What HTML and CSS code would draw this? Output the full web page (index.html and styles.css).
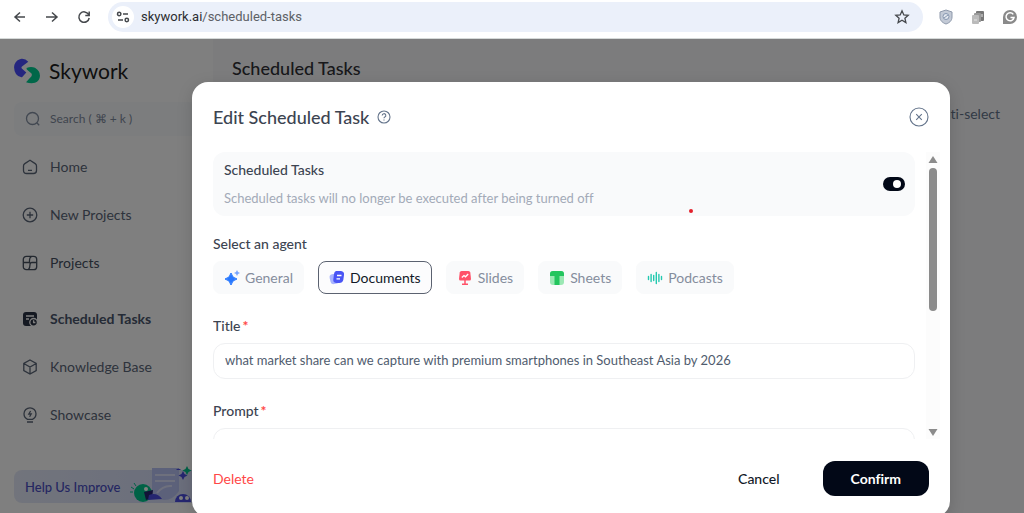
FILE: index.html
```html
<!DOCTYPE html>
<html lang="en">
<head>
  <meta charset="UTF-8">
  <meta name="viewport" content="width=device-width, initial-scale=1.0">
  <title>Scheduled Tasks</title>
  <link rel="stylesheet" href="styles.css">
</head>
<body>
  <!-- Browser bar -->
  <header class="browser-bar">
    <button class="bar-btn" aria-label="Back"><svg width="16" height="16" viewBox="0 0 16 16"><path d="M13 8H3M8 3.500L3 8l5 4.500"/></svg></button>
    <button class="bar-btn" aria-label="Forward"><svg width="16" height="16" viewBox="0 0 16 16"><path d="M2 8h11M8 3.500L13 8l-5 4.500"/></svg></button>
    <button class="bar-btn" aria-label="Reload"><svg width="16" height="16" viewBox="0 0 16 16"><path d="M12.600 5.500A5.200 5.200 0 1 0 13.200 9M13.200 2.500v4H9.300"/></svg></button>
    <div class="address">
      <span class="site-info"><svg width="14" height="14" viewBox="0 0 14 14"><circle cx="3.2" cy="4" r="1.7"/><path d="M7 4h5M2 10h5"/><circle cx="10.8" cy="10" r="1.7"/></svg></span>
      <span class="url">skywork.ai<span class="path">/scheduled-tasks</span></span>
      <button class="bar-btn star" aria-label="Bookmark"><svg width="16" height="16" viewBox="0 0 16 16"><path d="M8 1.8l1.8 4.1 4.4.4-3.3 2.9 1 4.4L8 11.3l-3.9 2.3 1-4.4-3.3-2.9 4.4-.4z"/></svg></button>
    </div>
    <div class="extensions">
      <svg width="14" height="16" viewBox="0 0 14 16"><path d="M7 1l6 2v5c0 4-3 6-6 7-3-1-6-3-6-7V3z" fill="#c3cad6" stroke="#8e99ab"/><circle cx="7" cy="7.5" r="3" fill="#e3e8ef" stroke="#8797b0"/><path d="M5 9l4-3" stroke="#8797b0"/></svg>
      <svg width="14" height="14" viewBox="0 0 14 14"><rect x="5" y="1" width="8" height="10" rx="1" fill="#777"/><rect x="3" y="3" width="7" height="9" rx="1" fill="#999"/><rect x="1" y="5" width="7" height="9" rx="1" fill="#bbb"/><path d="M3 10h3M11 4v3" stroke="#e5e5e5"/></svg>
      <svg width="14" height="14" viewBox="0 0 14 14"><path d="M0 14V7a7 7 0 1 1 7 7z" fill="#8a8a8a"/><path d="M10.3 4.4A4 4 0 1 0 11 7.5H7.5" fill="none" stroke="#fff" stroke-width="1.5"/></svg>
    </div>
  </header>

  <div class="app">
    <!-- Sidebar -->
    <aside class="sidebar">
      <a class="logo" href="#">
        <svg width="26" height="26" viewBox="0 0 26 26"><path d="M14.300 3.700Q11.500.500 7.500.800 2.500 1.600.500 6.500-.8 11.500 2 16q2.500 3.500 6 3.200l4.300-4.700L7.800 10.600q-.8-1.200.2-2.200z" fill="#4a4cff"/><path d="M12.500 10q4.500-2 8.500-.2 5 3 5 8-.3 5.500-5 7-4.500.9-9-.6l5.500-6q.8-1.400 0-2.600l-4.700-4.200z" fill="#00cf93"/></svg>
        <span>Skywork</span>
      </a>
      <button class="search">
        <svg width="16" height="16" viewBox="0 0 16 16"><circle cx="7.5" cy="7.5" r="6"/><path d="M11.8 11.8l2.4 2.4"/></svg>
        <span>Search ( ⌘ + k )</span>
      </button>
      <nav>
        <a href="#"><svg width="16" height="16" viewBox="0 0 16 16"><path d="M8 1.200L13.200 4.600c.9.6 1.300 1.400 1.300 2.400v4.400c0 2-1.100 3.100-3.100 3.100H4.600c-2 0-3.100-1.100-3.100-3.100V7c0-1 .4-1.800 1.300-2.400zM6 11.300h4"/></svg>Home</a>
        <a href="#"><svg width="16" height="16" viewBox="0 0 16 16"><circle cx="8" cy="8" r="6.8"/><path d="M8 4.800v6.400M4.800 8h6.400"/></svg>New Projects</a>
        <a href="#" class="dark"><svg width="16" height="16" viewBox="0 0 16 16"><rect x="1.300" y="1.300" width="13.400" height="13.400" rx="3"/><path d="M9.500 1.500q-2 1-2 3.500v2.500H1.500M14.500 7.500h-4.500q-2 0-2 2 0 3.500-1.500 5"/></svg>Projects</a>
        <a href="#" class="active"><svg width="16" height="16" viewBox="0 0 16 16"><rect x="1" y="1" width="14" height="14" rx="3" class="solid"/><path class="light" d="M4 5h8M4 8h3"/><circle class="clock" cx="11.600" cy="11.300" r="3.800"/><path class="light" d="M11.600 9.300v2.200h1.800"/></svg>Scheduled Tasks</a>
        <a href="#"><svg width="16" height="16" viewBox="0 0 16 16"><path d="M8 1l6.200 3.500v7L8 15l-6.200-3.500v-7zM1.800 4.500L8 8l6.200-3.500M8 8v7"/></svg>Knowledge Base</a>
        <a href="#"><svg width="16" height="16" viewBox="0 0 16 16"><path d="M5.500 12.300C3.300 11.300 2 9.300 2 6.800a6 6 0 0 1 12 0c0 2.500-1.300 4.500-3.500 5.500zM5 15h6M8.600 4L6.800 7h2.400L7.600 9.800"/></svg>Showcase</a>
      </nav>
      <a class="improve" href="#">
        <span>Help Us Improve</span>
        <svg width="68" height="38" viewBox="0 0 68 38">
          <path d="M25 2h27v23q-6 9-15 9-9-1-12-5z" fill="#b9c2f4"/>
          <path d="M28 9h20M28 15h20M30 27q6-8 15-7" stroke="#dde1fb" stroke-width="2" fill="none"/>
          <circle cx="16" cy="27" r="9" fill="#00c58d"/>
          <path d="M17 26l9-2q0 9-7 10z" fill="#25246e"/><path d="M22 29q8-3 13 4l-14 1z" fill="#4a4ce0"/>
          <circle cx="19" cy="23" r="2" fill="#fff"/><path d="M4 21l3 2M7 17l2 3M3 26h3" stroke="#00c58d"/>
          <path d="M48 36a8 8 0 0 1 16 0z" fill="#4a4ce0"/><circle cx="54" cy="32" r="2" fill="#fff"/><circle cx="60" cy="32" r="2" fill="#fff"/>
          <path d="M49 4a3 3 0 0 1 5 0zM56 5l1.500 3 3 1.500-3 1.500-1.500 3-1.500-3-3-1.500 3-1.500z" fill="#4a4ce0"/>
          <path d="M60 0l1.500 3 3 1.500-3 1.500-1.500 3-1.500-3-3-1.500 3-1.500z" fill="#00c58d"/>
        </svg>
      </a>
    </aside>

    <!-- Page behind the dialog -->
    <main class="content">
      <h1>Scheduled Tasks</h1>
      <div class="toolbar"><button class="multi">Multi-select</button></div>
    </main>

    <!-- Edit dialog -->
    <div class="overlay">
      <form class="modal" role="dialog" aria-labelledby="dialog-title">
        <div class="modal-header">
          <h2 id="dialog-title">Edit Scheduled Task</h2>
          <svg class="help" width="14" height="14" viewBox="0 0 14 14"><circle cx="7" cy="7" r="6"/><path d="M5.200 5.500a1.800 1.800 0 1 1 2.600 1.600Q7 7.500 7 8.300M7 9.600v1"/></svg>
          <button type="button" class="close" aria-label="Close"><svg width="20" height="20" viewBox="0 0 20 20"><circle cx="10" cy="10" r="9"/><path d="M7.200 7.200l5.600 5.600M12.800 7.200l-5.600 5.600"/></svg></button>
        </div>

        <div class="modal-body">
          <div class="fields">
            <div class="switch-card">
              <div>
                <label for="enabled">Scheduled Tasks</label>
                <p>Scheduled tasks will no longer be executed after being turned off</p>
              </div>
              <input type="checkbox" id="enabled" class="switch" checked>
              <span class="pointer"></span>
            </div>

            <h3>Select an agent</h3>
            <div class="agents">
              <button type="button"><svg width="16" height="16" viewBox="0 0 16 16"><path d="M7 3q1 5 6 6-5 1-6 6-1-5-6-6 5-1 6-6z" fill="#2878ff" stroke="#2878ff" stroke-linejoin="round"/><path d="M13 0q.5 2.500 3 3-2.500.5-3 3-.5-2.500-3-3 2.500-.5 3-3z" fill="#79a6ff"/></svg>General</button>
              <button type="button" class="selected"><svg width="16" height="16" viewBox="0 0 16 16"><rect x="1" y="4" width="9" height="10" rx="3" fill="#a9b5ff" transform="rotate(-12 5 9)"/><path d="M7 1h5q3.500.5 3 4l-.7 5q-.8 3-4 3H7q-3-.5-2.700-3.500L5 4q.3-2.500 2-3z" fill="#4a55f5"/><path d="M8 5.500h4.500M7.500 8.800h3.500" stroke="#fff" stroke-width="1.300"/></svg>Documents</button>
              <button type="button"><svg width="16" height="16" viewBox="0 0 16 16"><path d="M4.500 1h7q1.500 0 1.800 1.500L14 9q0 1.500-1.500 1.500h-9Q2 10.500 2 9l.7-6.500Q3 1 4.500 1z" fill="#ff5269"/><path d="M8 10v4M5 14.300h6" stroke="#ff5269" stroke-width="1.500"/><path d="M4.800 7.500l2.200-2 1.500 1.300L11.200 4" stroke="#fff" stroke-width="1.300" fill="none"/></svg>Slides</button>
              <button type="button"><svg width="16" height="16" viewBox="0 0 16 16"><rect x="1" y="1" width="14" height="14" rx="3" fill="#9be8b4"/><path d="M4 1h8q3 0 3 3v2H1V4q0-3 3-3z" fill="#23c55e"/><path d="M5.500 5h5v10h-5z" fill="#23c55e"/></svg>Sheets</button>
              <button type="button"><svg width="16" height="16" viewBox="0 0 16 16"><path d="M1.500 6.500v3M4.100 4.500v7M6.700 5.500v5M9.300 2.500v11M11.900 4.500v7M14.500 6.500v3" stroke="#23c9b0" stroke-width="1.400" stroke-linecap="round"/></svg>Podcasts</button>
            </div>

            <label for="title">Title<b>*</b></label>
            <input type="text" id="title" value="what market share can we capture with premium smartphones in Southeast Asia by 2026">

            <label for="prompt">Prompt<b>*</b></label>
            <textarea id="prompt" rows="4"></textarea>
          </div>
          <div class="scrollbar">
            <svg width="10" height="7" viewBox="0 0 10 7"><path d="M5 0l4.500 7h-9z"/></svg>
            <span class="thumb"></span>
            <svg class="down" width="10" height="7" viewBox="0 0 10 7"><path d="M5 7l4.500-7h-9z"/></svg>
          </div>
        </div>

        <div class="modal-footer">
          <button type="button" class="delete">Delete</button>
          <button type="button" class="cancel">Cancel</button>
          <button type="button" class="confirm">Confirm</button>
        </div>
      </form>
    </div>
  </div>
</body>
</html>
```

FILE: styles.css
```css
* {
  box-sizing: border-box;
}

body {
  margin: 0;
  height: 100vh;
  display: flex;
  flex-direction: column;
  overflow: hidden;
  background: #fff;
  font-family: Lato, "Liberation Sans", sans-serif;
  font-size: 14px;
  font-variant-ligatures: none;
  line-height: 20px;
}

h1, h2, h3, p {
  margin: 0;
}

button {
  padding: 0;
  border: none;
  background: none;
  font: inherit;
  font-variant-ligatures: none;
  cursor: pointer;
}

a {
  text-decoration: none;
}

svg {
  display: block;
  flex: none;
}

/* Browser bar */
.browser-bar {
  display: flex;
  align-items: center;
  gap: 16px;
  height: 39px;
  padding: 0 7px 4px 12px;
  border-bottom: 1px solid #d5d9d8;
}

.bar-btn svg,
.site-info svg {
  fill: none;
  stroke: #45484c;
  stroke-width: 1.5;
}

.address {
  flex: 1;
  display: flex;
  align-items: center;
  gap: 7px;
  height: 30px;
  padding: 0 13px 0 4px;
  border-radius: 15px;
  background: #ebf0fa;
}

.site-info {
  padding: 4px;
  border-radius: 50%;
  background: #fff;
}

.url {
  flex: 1;
  font-family: Roboto, "Noto Sans", sans-serif;
  font-size: 13px;
  color: #2b2d30;
}

.path {
  color: #5d6166;
}

.star svg {
  stroke-width: 1.3;
}

.extensions {
  display: flex;
  align-items: center;
  gap: 18px;
}

.extensions svg {
  fill: none;
}

/* App */
.app {
  flex: 1;
  min-height: 0;
  display: flex;
  position: relative;
}

.sidebar {
  width: 213px;
  display: flex;
  flex-direction: column;
  padding: 19px 10px 10px 14px;
  background: #fff;
}

.logo {
  display: flex;
  align-items: center;
  gap: 9px;
  height: 26px;
  font-size: 21px;
  color: #1d1d20;
}

.search {
  display: flex;
  align-items: center;
  gap: 9px;
  height: 34px;
  margin: 18px 0 7px;
  padding: 0 11px;
  border-radius: 8px;
  background: #f8fafd;
  font-size: 12px;
  color: #7f8a9c;
}

.search svg {
  fill: none;
  stroke: #8490a2;
  stroke-width: 1.3;
}

nav a {
  display: flex;
  align-items: center;
  gap: 12px;
  height: 48px;
  padding-left: 8px;
  color: #5b6678;
}

nav svg {
  fill: none;
  stroke: currentColor;
  stroke-width: 1.3;
}

nav .dark {
  color: #46505f;
}

nav .active {
  margin-top: 8px;
  font-weight: bold;
  color: #4a566c;
}

nav .solid {
  fill: #2a3344;
  stroke: none;
}

nav .light {
  stroke: #fff;
}

nav .clock {
  fill: #2a3344;
  stroke: #fff;
}

.improve {
  display: flex;
  align-items: center;
  justify-content: space-between;
  height: 33px;
  margin-top: auto;
  padding-left: 11px;
  border-radius: 8px;
  background: linear-gradient(90deg, #e4e9f8, #d5dcf8);
  color: #4a4ec4;
  font-weight: 500;
  font-size: 13px;
  white-space: nowrap;
}

.improve svg {
  margin: 0 8px 4px 0;
}

.content {
  flex: 1;
  padding: 19px 24px 0 19px;
  background: #f8f9fb;
}

.content h1 {
  font-size: 18px;
  font-weight: 500;
  color: #303136;
}

.toolbar {
  display: flex;
  justify-content: flex-end;
  margin-top: 26px;
}

.multi {
  color: #64748b;
}

/* Dialog */
.overlay {
  position: absolute;
  inset: 0;
  padding: 43px 74px 0 192px;
  background: rgba(0, 0, 0, 0.5);
}

.modal {
  border-radius: 16px;
  background: #fff;
  box-shadow: 0 4px 16px rgba(0, 0, 0, 0.15);
  color: #3c4451;
}

.modal-header {
  display: flex;
  align-items: center;
  gap: 8px;
  padding: 25px 21px;
}

.modal-header h2 {
  font-size: 18px;
  font-weight: 500;
}

.help,
.close svg {
  fill: none;
  stroke: #64748b;
  stroke-width: 1.1;
}

.close {
  margin-left: auto;
}

.modal-body {
  display: flex;
  gap: 11px;
  height: 287px;
  padding: 0 10px 0 21px;
}

.fields {
  flex: 1;
  overflow: hidden;
}

.fields label,
.fields h3 {
  display: block;
  margin: 22px 0 7px;
  font-size: 14px;
  font-weight: 500;
}

.fields h3 {
  margin-top: 18px;
}

.fields b {
  margin-left: 2px;
  color: #ff4747;
}

.switch-card {
  position: relative;
  display: flex;
  align-items: center;
  justify-content: space-between;
  height: 64px;
  padding: 0 10px 0 11px;
  border-radius: 12px;
  background: #f9fafb;
}

.switch-card label {
  margin: 0 0 8px;
}

.switch-card p {
  font-size: 13px;
  color: #a3aab8;
}

.switch {
  appearance: none;
  display: flex;
  justify-content: flex-end;
  width: 22px;
  height: 14px;
  margin: 0;
  padding: 3px 4px;
  border-radius: 7px;
  background: #020817;
}

.switch::before {
  content: "";
  width: 8px;
  height: 8px;
  border-radius: 50%;
  background: #fff;
}

.pointer {
  position: absolute;
  right: 222px;
  bottom: 3px;
  width: 4px;
  height: 4px;
  border-radius: 50%;
  background: #e3202b;
}

.agents {
  display: flex;
  gap: 14px;
}

.agents button {
  display: flex;
  align-items: center;
  gap: 5px;
  height: 33px;
  padding: 0 10px;
  border: 1px solid #f9fafb;
  border-radius: 8px;
  background: #f9fafb;
  color: #858d9d;
}

.agents .selected {
  border-color: #5b6270;
  background: #fcfcfd;
  color: #111827;
}

#title,
#prompt {
  display: block;
  width: 100%;
  height: 36px;
  padding: 0 11px 2px;
  border: 1px solid #eff0f2;
  border-radius: 12px;
  background: #fff;
  font: inherit;
  font-size: 13px;
  color: #505c6e;
}

#prompt {
  height: 96px;
  resize: none;
}

.scrollbar {
  display: flex;
  flex-direction: column;
  align-items: center;
  gap: 5px;
  width: 14px;
  padding: 4px 0 3px;
  background: #fcfcfc;
}

.scrollbar svg {
  fill: #8b8b8b;
}

.thumb {
  width: 8px;
  height: 51%;
  border-radius: 4px;
  background: #8b8b8b;
}

.down {
  margin-top: auto;
}

.modal-footer {
  display: flex;
  align-items: center;
  padding: 22px 21px 21px;
}

.delete {
  margin-right: auto;
  color: #ff4747;
}

.cancel {
  margin-right: 43px;
  font-weight: 500;
  color: #111827;
}

.confirm {
  height: 35px;
  padding: 0 28px;
  border-radius: 12px;
  background: #020817;
  font-weight: bold;
  color: #fff;
}
```
